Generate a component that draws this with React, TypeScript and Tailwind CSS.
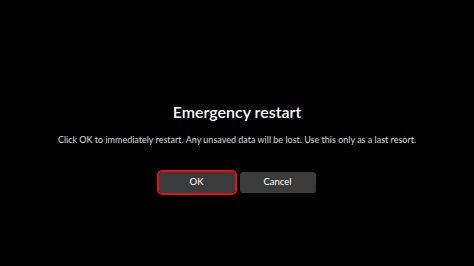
import React from "react";

export default function App() {
  return (
    <div
      className="w-[474px] h-[266px] bg-black flex flex-col items-center text-white"
      style={{ fontFamily: 'Lato, "Noto Sans", sans-serif' }}
    >
      <h1 className="mt-[101px] text-[16px] leading-[22px] font-semibold text-white">
        Emergency restart
      </h1>
      <p className="mt-[10px] text-[9px] leading-[14px] text-[#d9d9d9]">
        Click OK to immediately restart. Any unsaved data will be lost. Use this only as a last resort.
      </p>
      <div className="mt-[25px] flex items-center gap-[5px]">
        <button className="w-[76px] h-[21px] rounded-[3px] bg-[#3b3b3b] text-[9.5px] text-white outline-2 outline-offset-0 outline-[#e2101b]" style={{ outlineStyle: "solid" }}>
          OK
        </button>
        <button className="w-[76px] h-[21px] rounded-[3px] bg-[#3b3b3b] text-[9.5px] text-white">
          Cancel
        </button>
      </div>
    </div>
  );
}
